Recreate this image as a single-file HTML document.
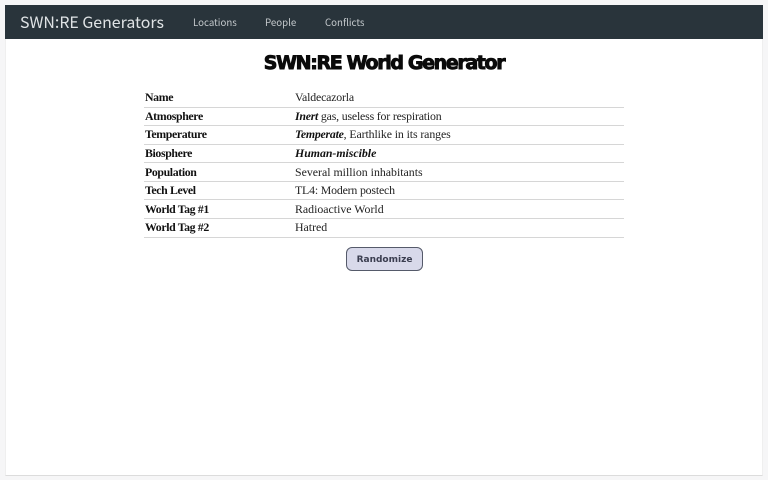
<!DOCTYPE html>
<html>
<head>
<meta charset="utf-8">
<style>
html,body{margin:0;padding:0;width:768px;height:480px;overflow:hidden;background:#f6f6f7}
*{box-sizing:border-box}
#card{position:absolute;left:5px;top:5px;width:758px;height:471px;background:#fff;border-bottom:1px solid #dcdcdc;border-left:1px solid #efefef;border-right:1px solid #efefef}
#nav{position:absolute;left:5px;top:5px;width:758px;height:34px;background:#29343b}
.s{position:absolute;white-space:nowrap;font-family:"Noto Sans CJK JP","DejaVu Sans",sans-serif}
.brand{left:20px;top:11px;font-size:15.9px;line-height:22px;color:#dfe3e5}
.lnk{top:15px;font-size:9.7px;line-height:15px;color:#c4c9cc}
h1{position:absolute;left:0;top:52px;width:768px;margin:0;text-align:center;font:900 19px/22px "DejaVu Sans",sans-serif;color:#0a0a0a;-webkit-text-stroke:.9px #0a0a0a;letter-spacing:-1.36px}
#t{position:absolute;left:144px;top:89px;width:480px;font:11.85px/18px "Liberation Serif",serif;color:#222}
.r{position:relative;height:18.57px;border-bottom:1px solid #d6d6d6;white-space:nowrap}
.r span{position:absolute;top:-1px}
.r.d span{top:0}
.k{left:1px;font-weight:bold;color:#111;letter-spacing:-.38px}
.v{left:151px}
.v b{font-style:italic;color:#111;letter-spacing:-.25px}
.n{letter-spacing:-.18px}
.m{letter-spacing:-.1px}
.v b.h{letter-spacing:-.02px}
button{position:absolute;left:346px;top:247px;width:77px;height:24px;padding:0;background:#d8d9ea;border:1px solid #555a6a;border-radius:6px;font:bold 9px/24px "DejaVu Sans",sans-serif;color:#3a3d4f}
</style>
</head>
<body>
<div id="card"></div>
<div id="nav"></div>
<div class="s brand">SWN:RE Generators</div>
<div class="s lnk" style="left:193px">Locations</div>
<div class="s lnk" style="left:265px">People</div>
<div class="s lnk" style="left:325px">Conflicts</div>
<h1>SWN:RE World Generator</h1>
<div id="t">
<div class="r"><span class="k">Name</span><span class="v n">Valdecazorla</span></div>
<div class="r"><span class="k">Atmosphere</span><span class="v n"><b>Inert</b> gas, useless for respiration</span></div>
<div class="r"><span class="k">Temperature</span><span class="v m"><b>Temperate</b>, Earthlike in its ranges</span></div>
<div class="r"><span class="k">Biosphere</span><span class="v"><b class="h">Human-miscible</b></span></div>
<div class="r d"><span class="k">Population</span><span class="v">Several million inhabitants</span></div>
<div class="r"><span class="k">Tech Level</span><span class="v n">TL4: Modern postech</span></div>
<div class="r d"><span class="k">World Tag #1</span><span class="v">Radioactive World</span></div>
<div class="r"><span class="k">World Tag #2</span><span class="v">Hatred</span></div>
</div>
<button>Randomize</button>
</body>
</html>
